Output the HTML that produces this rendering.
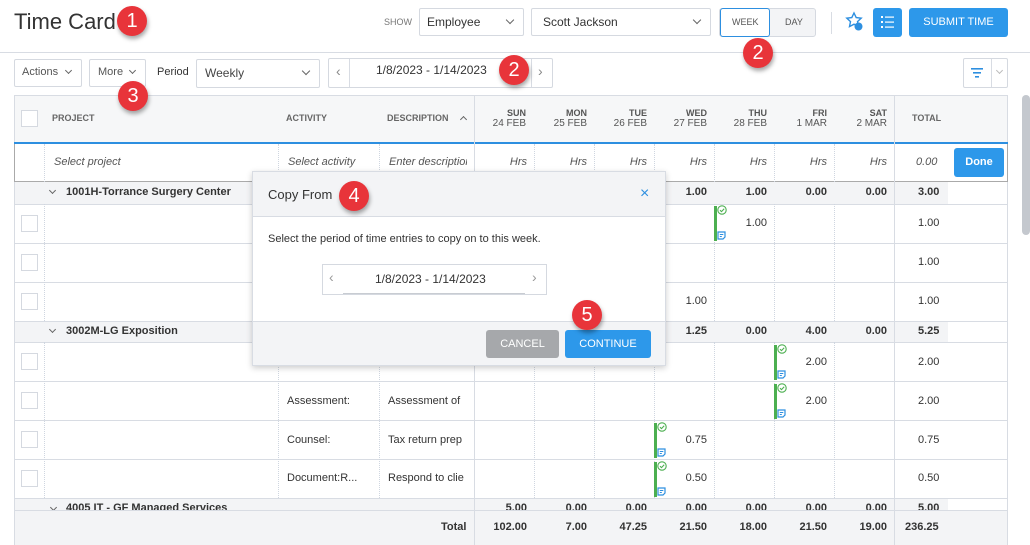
<!DOCTYPE html>
<html><head><meta charset="utf-8"><style>
*{box-sizing:border-box;margin:0;padding:0}
body{width:1030px;height:545px;overflow:hidden;background:#fff;font-family:"Liberation Sans",sans-serif;color:#333;position:relative}
.a{position:absolute}
.box{position:absolute;border:1px solid #d5d9e0;background:#fff;border-radius:2px}
.t{position:absolute;font-size:11px;white-space:nowrap}
.r{text-align:right}
.badge{position:absolute;width:30px;height:30px;border-radius:50%;background:#e8343a;color:#fff;font-size:20px;text-align:center;line-height:30px;box-shadow:1px 3px 4px rgba(0,0,0,.35)}
.hl{position:absolute;height:1px;background:#d8dce3}
.vl{position:absolute;width:0;border-left:1px dotted #cfd6e0}
.vs{position:absolute;width:1px;background:#d8dce3}
.cb{position:absolute;width:17px;height:17px;border:1px solid #d5d9e0;background:#fff}
.chev{display:block;width:6px;height:6px;border-right:1.3px solid #666;border-bottom:1.3px solid #666;transform:rotate(45deg)}
.bar{position:absolute;width:3px;background:#4caf50}
.hd{font-size:9px;font-weight:bold;color:#666}
</style></head><body>
<svg width="0" height="0" style="position:absolute"><defs>
<g id="ck"><circle cx="5" cy="5" r="4.2" fill="none" stroke="#4caf50" stroke-width="1.1"/><path d="M3 5.2l1.5 1.4L7.2 3.8" fill="none" stroke="#4caf50" stroke-width="1.1"/></g>
<g id="nt"><path d="M1 1h7v5l-2 2H1z" fill="#fff" stroke="#2d8fe0" stroke-width="1.2"/><path d="M2.8 3.5h3.5M2.8 5.5h2" stroke="#2d8fe0" stroke-width="1"/></g>
</defs></svg>
<!-- header -->
<div class="t" style="left:14px;top:9px;font-size:22px;color:#333">Time Card</div>
<div class="t" style="left:384px;top:17px;font-size:9px;color:#777">SHOW</div>
<div class="box" style="left:419px;top:8px;width:105px;height:28px"></div>
<div class="t" style="left:427px;top:15px;font-size:12px">Employee</div>
<div class="a" style="left:507px;top:17px"><span class="chev"></span></div>
<div class="box" style="left:531px;top:8px;width:180px;height:28px"></div>
<div class="t" style="left:543px;top:15px;font-size:12px">Scott Jackson</div>
<div class="a" style="left:694px;top:17px"><span class="chev"></span></div>
<div class="a" style="left:719px;top:8px;width:97px;height:29px;background:#f3f4f6;border:1px solid #d5d9e0;border-radius:3px"></div>
<div class="a" style="left:720px;top:8px;width:50px;height:29px;background:#fff;border:1.5px solid #2d8fe0;border-radius:3px"></div>
<div class="t" style="left:732px;top:17px;font-size:9px;color:#555">WEEK</div>
<div class="t" style="left:785px;top:17px;font-size:9px;color:#555">DAY</div>
<div class="vs" style="left:831px;top:12px;height:22px"></div>
<svg class="a" style="left:845px;top:11px" width="22" height="22" viewBox="0 0 22 22"><path d="M9 2l2.2 4.6 5 .6-3.7 3.4 1 5L9 13.2 4.5 15.6l1-5L1.8 7.2l5-.6z" fill="none" stroke="#2d8fe0" stroke-width="1.4"/><circle cx="13.5" cy="15.5" r="4" fill="#2d8fe0"/></svg>
<div class="a" style="left:873px;top:8px;width:29px;height:29px;background:#2d98ea;border-radius:3px"></div>
<svg class="a" style="left:880px;top:15px" width="15" height="15"><g fill="#fff"><rect x="1" y="1" width="2" height="2"/><rect x="1" y="6" width="2" height="2"/><rect x="1" y="11" width="2" height="2"/><rect x="5" y="1.5" width="9" height="1.2"/><rect x="5" y="6.5" width="9" height="1.2"/><rect x="5" y="11.5" width="9" height="1.2"/></g></svg>
<div class="a" style="left:909px;top:8px;width:99px;height:29px;background:#2d98ea;border-radius:3px;color:#fff;font-size:11px;text-align:center;line-height:29px">SUBMIT TIME</div>
<div class="hl" style="left:0;top:52px;width:1030px"></div>
<!-- toolbar -->
<div class="box" style="left:14px;top:59px;width:68px;height:28px"></div>
<div class="t" style="left:22px;top:66px;color:#555">Actions</div><div class="a" style="left:66px;top:68px"><span class="chev" style="width:5px;height:5px"></span></div>
<div class="box" style="left:89px;top:59px;width:57px;height:28px"></div>
<div class="t" style="left:98px;top:66px;color:#555">More</div><div class="a" style="left:130px;top:68px"><span class="chev" style="width:5px;height:5px"></span></div>
<div class="t" style="left:157px;top:66px">Period</div>
<div class="box" style="left:196px;top:59px;width:124px;height:29px"></div>
<div class="t" style="left:205px;top:66px;font-size:12px;color:#444">Weekly</div><div class="a" style="left:303px;top:68px"><span class="chev"></span></div>
<div class="box" style="left:328px;top:58px;width:225px;height:30px"></div>
<div class="vs" style="left:349px;top:59px;height:28px"></div>
<div class="vs" style="left:531px;top:59px;height:28px"></div>
<div class="t" style="left:336px;top:63px;font-size:14px;color:#888">‹</div>
<div class="t" style="left:538px;top:63px;font-size:14px;color:#888">›</div>
<div class="t" style="left:376px;top:63px;font-size:12px">1/8/2023 - 1/14/2023</div>
<div class="box" style="left:963px;top:58px;width:45px;height:30px"></div>
<div class="vs" style="left:991px;top:59px;height:28px"></div>
<svg class="a" style="left:970px;top:67px" width="14" height="12"><g fill="#2d8fe0"><rect x="1" y="1" width="12" height="1.6"/><rect x="3" y="5" width="8" height="1.6"/><rect x="5" y="9" width="4" height="1.6"/></g></svg>
<div class="a" style="left:997px;top:68px"><span class="chev" style="border-color:#bbb;width:5px;height:5px"></span></div>
<!-- scrollbar -->
<div class="a" style="left:1022px;top:95px;width:8px;height:140px;background:#c4c8ce;border-radius:4px"></div>
<!-- table -->
<div class="a" style="left:14px;top:95px;width:994px;height:450px;border:1px solid #d8dce3;border-bottom:none"></div>
<div class="a" style="left:15px;top:96px;width:992px;height:46px;background:#f6f7f8"></div>
<div class="a" style="left:14px;top:142px;width:994px;height:2px;background:#2d8fe0"></div>
<div class="a" style="left:14px;top:144px;width:994px;height:38px;border:1px solid #aaa;border-top:none"></div>
<div class="a" style="left:15px;top:182px;width:933px;height:22px;background:#f3f4f6"></div>
<div class="a" style="left:15px;top:321px;width:933px;height:21px;background:#f3f4f6"></div>
<div class="a" style="left:15px;top:498px;width:933px;height:12px;background:#f3f4f6"></div>
<div class="a" style="left:15px;top:510px;width:992px;height:35px;background:#f3f4f6;border-top:1px solid #d8dce3"></div>
<!-- h lines -->
<div class="hl" style="left:14px;top:204px;width:994px"></div>
<div class="hl" style="left:14px;top:243px;width:994px"></div>
<div class="hl" style="left:14px;top:282px;width:994px"></div>
<div class="hl" style="left:14px;top:321px;width:994px"></div>
<div class="hl" style="left:14px;top:342px;width:994px"></div>
<div class="hl" style="left:14px;top:381px;width:994px"></div>
<div class="hl" style="left:14px;top:420px;width:994px"></div>
<div class="hl" style="left:14px;top:459px;width:994px"></div>
<div class="hl" style="left:14px;top:498px;width:994px"></div>
<!-- v lines -->
<div class="vs" style="left:474px;top:96px;height:449px"></div>
<div class="vs" style="left:894px;top:96px;height:449px"></div>
<div class="vl" style="left:44px;top:144px;height:38px"></div>
<div class="vl" style="left:44px;top:204px;height:117px"></div>
<div class="vl" style="left:44px;top:342px;height:156px"></div>
<div class="vl" style="left:278px;top:144px;height:38px"></div>
<div class="vl" style="left:278px;top:342px;height:156px"></div>
<div class="vl" style="left:379px;top:144px;height:38px"></div>
<div class="vl" style="left:379px;top:342px;height:156px"></div>
<div class="vl" style="left:534px;top:144px;height:38px"></div><div class="vl" style="left:534px;top:204px;height:117px"></div><div class="vl" style="left:534px;top:342px;height:156px"></div>
<div class="vl" style="left:594px;top:144px;height:38px"></div><div class="vl" style="left:594px;top:204px;height:117px"></div><div class="vl" style="left:594px;top:342px;height:156px"></div>
<div class="vl" style="left:654px;top:144px;height:38px"></div><div class="vl" style="left:654px;top:204px;height:117px"></div><div class="vl" style="left:654px;top:342px;height:156px"></div>
<div class="vl" style="left:714px;top:144px;height:38px"></div><div class="vl" style="left:714px;top:204px;height:117px"></div><div class="vl" style="left:714px;top:342px;height:156px"></div>
<div class="vl" style="left:774px;top:144px;height:38px"></div><div class="vl" style="left:774px;top:204px;height:117px"></div><div class="vl" style="left:774px;top:342px;height:156px"></div>
<div class="vl" style="left:834px;top:144px;height:38px"></div><div class="vl" style="left:834px;top:204px;height:117px"></div><div class="vl" style="left:834px;top:342px;height:156px"></div>
<!-- header texts -->
<div class="cb" style="left:21px;top:110px"></div>
<div class="t hd" style="left:52px;top:113px">PROJECT</div>
<div class="t hd" style="left:286px;top:113px">ACTIVITY</div>
<div class="t hd" style="left:387px;top:113px">DESCRIPTION</div>
<div class="a" style="left:461px;top:117px"><span class="chev" style="transform:rotate(-135deg);width:5px;height:5px"></span></div>
<div class="t r" style="left:474px;top:108px;width:52px;font-size:10px;line-height:10px;color:#555"><b style="font-size:9px">SUN</b><br>24 FEB</div>
<div class="t r" style="left:534px;top:108px;width:53px;font-size:10px;line-height:10px;color:#555"><b style="font-size:9px">MON</b><br>25 FEB</div>
<div class="t r" style="left:594px;top:108px;width:53px;font-size:10px;line-height:10px;color:#555"><b style="font-size:9px">TUE</b><br>26 FEB</div>
<div class="t r" style="left:654px;top:108px;width:53px;font-size:10px;line-height:10px;color:#555"><b style="font-size:9px">WED</b><br>27 FEB</div>
<div class="t r" style="left:714px;top:108px;width:53px;font-size:10px;line-height:10px;color:#555"><b style="font-size:9px">THU</b><br>28 FEB</div>
<div class="t r" style="left:774px;top:108px;width:53px;font-size:10px;line-height:10px;color:#555"><b style="font-size:9px">FRI</b><br>1 MAR</div>
<div class="t r" style="left:834px;top:108px;width:53px;font-size:10px;line-height:10px;color:#555"><b style="font-size:9px">SAT</b><br>2 MAR</div>
<div class="t hd" style="left:912px;top:113px">TOTAL</div>
<!-- input row -->
<div class="t" style="left:54px;top:156px;font-style:italic;color:#555">Select project</div>
<div class="t" style="left:288px;top:156px;font-style:italic;color:#555">Select activity</div>
<div class="t" style="left:389px;top:156px;font-style:italic;color:#555;width:78px;overflow:hidden">Enter description</div>
<div class="t r" style="left:474px;top:156px;width:53px;font-style:italic;color:#555">Hrs</div>
<div class="t r" style="left:534px;top:156px;width:53px;font-style:italic;color:#555">Hrs</div>
<div class="t r" style="left:594px;top:156px;width:53px;font-style:italic;color:#555">Hrs</div>
<div class="t r" style="left:654px;top:156px;width:53px;font-style:italic;color:#555">Hrs</div>
<div class="t r" style="left:714px;top:156px;width:53px;font-style:italic;color:#555">Hrs</div>
<div class="t r" style="left:774px;top:156px;width:53px;font-style:italic;color:#555">Hrs</div>
<div class="t r" style="left:834px;top:156px;width:53px;font-style:italic;color:#555">Hrs</div>
<div class="t" style="left:916px;top:156px;font-style:italic;color:#555">0.00</div>
<div class="a" style="left:954px;top:148px;width:50px;height:29px;background:#2d98ea;border-radius:3px;color:#fff;font-size:11px;font-weight:bold;text-align:center;line-height:29px">Done</div>
<!-- group 1 -->
<div class="a" style="left:50px;top:188px"><span class="chev" style="width:5px;height:5px"></span></div>
<div class="t" style="left:66px;top:186px;font-weight:bold">1001H-Torrance Surgery Center</div>
<div class="t r" style="left:654px;top:186px;width:53px;font-weight:bold">1.00</div>
<div class="t r" style="left:714px;top:186px;width:53px;font-weight:bold">1.00</div>
<div class="t r" style="left:774px;top:186px;width:53px;font-weight:bold">0.00</div>
<div class="t r" style="left:834px;top:186px;width:53px;font-weight:bold">0.00</div>
<div class="t" style="left:918px;top:186px;font-weight:bold">3.00</div>
<div class="cb" style="left:21px;top:215px"></div><div class="cb" style="left:21px;top:254px"></div><div class="cb" style="left:21px;top:293px"></div>
<div class="bar" style="left:714px;top:206px;height:35px"></div>
<svg class="a" style="left:717px;top:205px" width="10" height="10"><use href="#ck"/></svg><svg class="a" style="left:717px;top:231px" width="10" height="10"><use href="#nt"/></svg>
<div class="t r" style="left:714px;top:217px;width:53px">1.00</div>
<div class="t" style="left:918px;top:217px">1.00</div>
<div class="t" style="left:918px;top:256px">1.00</div>
<div class="t r" style="left:654px;top:295px;width:53px">1.00</div>
<div class="t" style="left:918px;top:295px">1.00</div>
<!-- group 2 -->
<div class="a" style="left:50px;top:327px"><span class="chev" style="width:5px;height:5px"></span></div>
<div class="t" style="left:66px;top:325px;font-weight:bold">3002M-LG Exposition</div>
<div class="t r" style="left:654px;top:325px;width:53px;font-weight:bold">1.25</div>
<div class="t r" style="left:714px;top:325px;width:53px;font-weight:bold">0.00</div>
<div class="t r" style="left:774px;top:325px;width:53px;font-weight:bold">4.00</div>
<div class="t r" style="left:834px;top:325px;width:53px;font-weight:bold">0.00</div>
<div class="t" style="left:918px;top:325px;font-weight:bold">5.25</div>
<div class="cb" style="left:21px;top:353px"></div><div class="cb" style="left:21px;top:392px"></div><div class="cb" style="left:21px;top:431px"></div><div class="cb" style="left:21px;top:470px"></div>
<div class="bar" style="left:774px;top:345px;height:35px"></div>
<svg class="a" style="left:777px;top:344px" width="10" height="10"><use href="#ck"/></svg><svg class="a" style="left:777px;top:370px" width="10" height="10"><use href="#nt"/></svg>
<div class="t r" style="left:774px;top:356px;width:53px">2.00</div><div class="t" style="left:918px;top:356px">2.00</div>
<div class="t" style="left:287px;top:395px">Assessment:</div><div class="t" style="left:388px;top:395px">Assessment of</div>
<div class="bar" style="left:774px;top:384px;height:35px"></div>
<svg class="a" style="left:777px;top:383px" width="10" height="10"><use href="#ck"/></svg><svg class="a" style="left:777px;top:409px" width="10" height="10"><use href="#nt"/></svg>
<div class="t r" style="left:774px;top:395px;width:53px">2.00</div><div class="t" style="left:918px;top:395px">2.00</div>
<div class="t" style="left:287px;top:434px">Counsel:</div><div class="t" style="left:388px;top:434px">Tax return prep</div>
<div class="bar" style="left:654px;top:423px;height:35px"></div>
<svg class="a" style="left:657px;top:422px" width="10" height="10"><use href="#ck"/></svg><svg class="a" style="left:657px;top:448px" width="10" height="10"><use href="#nt"/></svg>
<div class="t r" style="left:654px;top:434px;width:53px">0.75</div><div class="t" style="left:918px;top:434px">0.75</div>
<div class="t" style="left:287px;top:472px">Document:R...</div><div class="t" style="left:388px;top:472px">Respond to clie</div>
<div class="bar" style="left:654px;top:462px;height:35px"></div>
<svg class="a" style="left:657px;top:461px" width="10" height="10"><use href="#ck"/></svg><svg class="a" style="left:657px;top:487px" width="10" height="10"><use href="#nt"/></svg>
<div class="t r" style="left:654px;top:472px;width:53px">0.50</div><div class="t" style="left:918px;top:472px">0.50</div>
<!-- group 3 clipped -->
<div class="a" style="left:15px;top:498px;width:992px;height:12px;overflow:hidden">
<div class="a" style="left:36px;top:7px"><span class="chev" style="width:5px;height:5px"></span></div>
<div class="t" style="left:51px;top:4px;font-weight:bold">4005 IT - GF Managed Services</div>
<div class="t r" style="left:459px;top:4px;width:53px;font-weight:bold">5.00</div>
<div class="t r" style="left:519px;top:4px;width:53px;font-weight:bold">0.00</div>
<div class="t r" style="left:579px;top:4px;width:53px;font-weight:bold">0.00</div>
<div class="t r" style="left:639px;top:4px;width:53px;font-weight:bold">0.00</div>
<div class="t r" style="left:699px;top:4px;width:53px;font-weight:bold">0.00</div>
<div class="t r" style="left:759px;top:4px;width:53px;font-weight:bold">0.00</div>
<div class="t r" style="left:819px;top:4px;width:53px;font-weight:bold">0.00</div>
<div class="t" style="left:903px;top:4px;font-weight:bold">5.00</div>
</div>
<!-- totals -->
<div class="t" style="left:441px;top:521px;font-weight:bold">Total</div>
<div class="t r" style="left:474px;top:521px;width:53px;font-weight:bold">102.00</div>
<div class="t r" style="left:534px;top:521px;width:53px;font-weight:bold">7.00</div>
<div class="t r" style="left:594px;top:521px;width:53px;font-weight:bold">47.25</div>
<div class="t r" style="left:654px;top:521px;width:53px;font-weight:bold">21.50</div>
<div class="t r" style="left:714px;top:521px;width:53px;font-weight:bold">18.00</div>
<div class="t r" style="left:774px;top:521px;width:53px;font-weight:bold">21.50</div>
<div class="t r" style="left:834px;top:521px;width:53px;font-weight:bold">19.00</div>
<div class="t" style="left:905px;top:521px;font-weight:bold">236.25</div>
<!-- modal -->
<div class="a" style="left:252px;top:171px;width:414px;height:195px;background:#fff;border:1px solid #d8dce3;box-shadow:0 2px 6px rgba(0,0,0,.2)">
<div class="a" style="left:0;top:0;width:412px;height:45px;background:#f3f4f6;border-bottom:1px solid #d8dce3"></div>
<div class="t" style="left:15px;top:15px;font-size:13px">Copy From</div>
<div class="t" style="left:387px;top:13px;font-size:16px;color:#2d8fe0">×</div>
<div class="t" style="left:15px;top:61px">Select the period of time entries to copy on to this week.</div>
<div class="a" style="left:69px;top:92px;width:225px;height:31px;border:1px solid #d5d9e0"></div>
<div class="a" style="left:90px;top:121px;width:182px;height:1px;background:#c8ccd2"></div>
<div class="t" style="left:76px;top:97px;font-size:14px;color:#999">‹</div>
<div class="t" style="left:279px;top:97px;font-size:14px;color:#999">›</div>
<div class="t" style="left:122px;top:100px;font-size:12px">1/8/2023 - 1/14/2023</div>
<div class="a" style="left:0;top:149px;width:412px;height:44px;background:#f3f4f6;border-top:1px solid #d8dce3"></div>
<div class="a" style="left:233px;top:158px;width:73px;height:28px;background:#a6a8ab;border-radius:3px;color:#fff;font-size:11px;text-align:center;line-height:28px">CANCEL</div>
<div class="a" style="left:312px;top:158px;width:86px;height:28px;background:#2d98ea;border-radius:3px;color:#fff;font-size:11px;text-align:center;line-height:28px">CONTINUE</div>
</div>
<!-- badges -->
<div class="badge" style="left:117px;top:6px">1</div>
<div class="badge" style="left:499px;top:55px">2</div>
<div class="badge" style="left:743px;top:38px">2</div>
<div class="badge" style="left:118px;top:81px">3</div>
<div class="badge" style="left:339px;top:181px">4</div>
<div class="badge" style="left:572px;top:300px">5</div>
</body></html>
